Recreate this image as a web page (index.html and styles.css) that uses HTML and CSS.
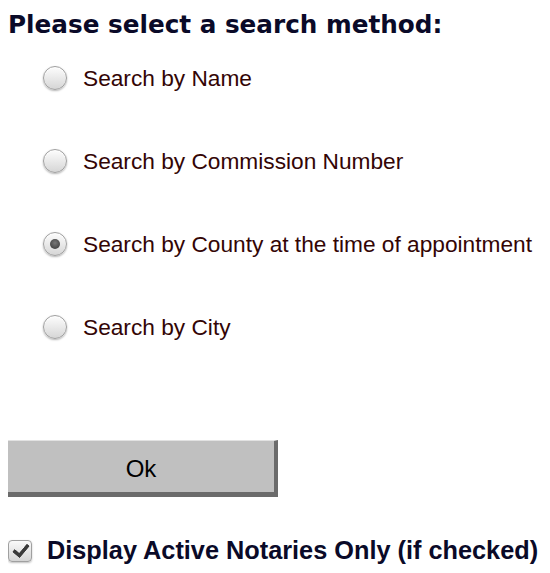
FILE: index.html
```html
<!DOCTYPE html>
<html lang="en">

<head>
    <meta charset="UTF-8">
    <title>Notary Search</title>
    <link rel="stylesheet" href="styles.css">
</head>

<body>
    <form class="search-form">
        <h2>Please select a search method:</h2>

        <div class="methods">
            <label class="method">
                <input type="radio" name="method" value="name">
                <span>Search by Name</span>
            </label>
            <label class="method">
                <input type="radio" name="method" value="commission">
                <span>Search by Commission Number</span>
            </label>
            <label class="method">
                <input type="radio" name="method" value="county" checked>
                <span>Search by County at the time of appointment</span>
            </label>
            <label class="method">
                <input type="radio" name="method" value="city">
                <span>Search by City</span>
            </label>
        </div>

        <button type="submit" class="ok-btn">Ok</button>

        <label class="active-only">
            <input type="checkbox" name="active" checked>
            <span>Display Active Notaries Only (if checked)</span>
        </label>
    </form>
</body>

</html>
```

FILE: styles.css
```css
body {
    margin: 8px;
    font-family: "Liberation Sans", Arial, sans-serif;
    background-color: #fff;
}

h2 {
    margin: 0;
    padding-top: 2px;
    font-family: "DejaVu Sans", Verdana, sans-serif;
    font-size: 24.7px;
    line-height: 30px;
    color: #0a0a28;
}

.methods {
    display: flex;
    flex-direction: column;
    gap: 57px;
    margin-top: 25px;
    padding-left: 35px;
}

.method {
    display: flex;
    align-items: center;
    gap: 16px;
    height: 26px;
    font-size: 22.7px;
    color: #330505;
    cursor: pointer;
}

.method input {
    appearance: none;
    margin: 0;
    width: 24px;
    height: 24px;
    border-radius: 50%;
    border: 1px solid #a0a0a0;
    background: linear-gradient(#fdfdfd, #d6d6d6);
    box-shadow: 0 1px 2px rgba(0, 0, 0, 0.3), inset 0 1px 1px #fff;
    display: grid;
    place-content: center;
}

.method input:checked::before {
    content: "";
    width: 10px;
    height: 10px;
    border-radius: 50%;
    background: radial-gradient(circle at 50% 40%, #777, #333);
}

.ok-btn {
    display: block;
    width: 271px;
    height: 57px;
    margin: 100px 0 0 -1px;
    padding: 4px 0 0;
    font-family: "Liberation Sans", Arial, sans-serif;
    font-size: 24px;
    color: #000;
    background-color: #c0c0c0;
    border-style: solid;
    border-width: 1px 4px 5px 1px;
    border-color: #e2e2e2 #6b6b6b #6b6b6b #e2e2e2;
    cursor: pointer;
}

.active-only {
    display: flex;
    align-items: center;
    gap: 15px;
    margin-top: 39px;
    font-size: 25.3px;
    font-weight: bold;
    color: #0a0a28;
}

.active-only input {
    appearance: none;
    margin: 0;
    width: 24px;
    height: 22px;
    border: 1px solid #a0a0a0;
    border-radius: 4px;
    background: linear-gradient(#fafafa, #d4d4d4);
    box-shadow: 0 1px 2px rgba(0, 0, 0, 0.25);
    display: grid;
    place-content: center;
}

/* checkmark drawn with borders */
.active-only input:checked::before {
    content: "";
    width: 6px;
    height: 12px;
    margin: -3px 0 0 1px;
    border-right: 4px solid #3a3a3a;
    border-bottom: 4px solid #3a3a3a;
    border-radius: 1px;
    transform: rotate(40deg);
}
```
